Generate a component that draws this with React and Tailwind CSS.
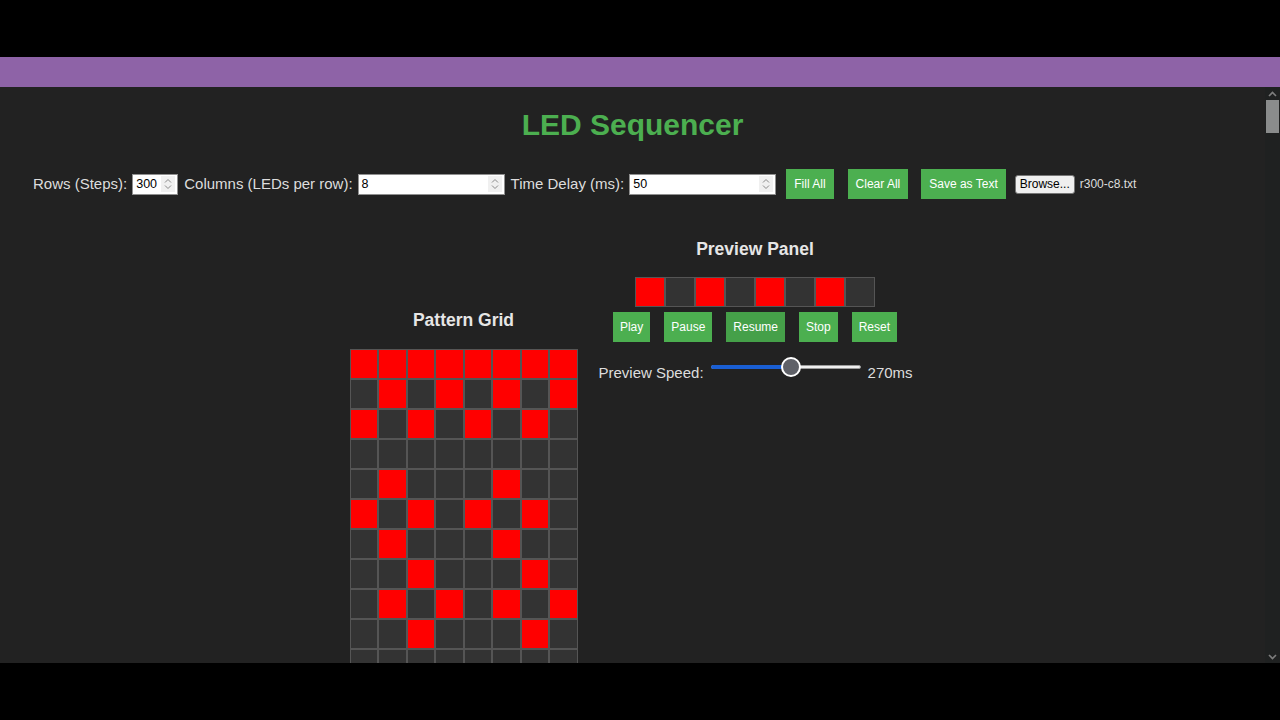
import React from "react";

const GRID = [
  "11111111",
  "01010101",
  "10101010",
  "00000000",
  "01000100",
  "10101010",
  "01000100",
  "00100010",
  "01010101",
  "00100010",
  "00000000",
  "00000000",
];

const PREVIEW = "10101010";

const Spinner = () => (
  <span className="flex h-[16px] w-[14px] flex-col items-center justify-center bg-[#f0f0f0]">
    <svg width="8" height="6" viewBox="0 0 8 6">
      <path d="M1 4.5 L4 1.5 L7 4.5" fill="none" stroke="#8a8a8a" strokeWidth="1" />
    </svg>
    <svg width="8" height="6" viewBox="0 0 8 6">
      <path d="M1 1.5 L4 4.5 L7 1.5" fill="none" stroke="#8a8a8a" strokeWidth="1" />
    </svg>
  </span>
);

const NumberBox = ({ value, width }) => (
  <span
    className={`flex h-[21px] items-center justify-between border border-[#8f8f8f] bg-white pl-[3px] pr-[2px] text-[12.5px] text-black ${width}`}
  >
    <span>{value}</span>
    <Spinner />
  </span>
);

const GreenButton = ({ children, className = "" }) => (
  <button className={`h-[30px] shrink-0 whitespace-nowrap bg-[#4caf50] text-white ${className}`}>
    {children}
  </button>
);

const Cell = ({ on, className = "" }) => (
  <div
    className={`border border-[#555] ${on ? "bg-[#ff0000]" : "bg-[#333333]"} ${className}`}
  />
);

export default function App() {
  return (
    <div
      className="flex h-[720px] w-[1280px] flex-col overflow-hidden bg-black"
      style={{ fontFamily: '"Liberation Sans", Arial, sans-serif' }}
    >
      <div className="h-[57px] shrink-0 bg-black" />
      <div className="h-[30px] shrink-0 bg-[#8e63a7]" />

      <div className="flex h-[576px] shrink-0 overflow-hidden bg-[#222222]">
        {/* page body */}
        <div className="flex-1 overflow-hidden">
          <h1 className="pt-[20px] text-center text-[30px] font-bold leading-[36px] text-[#4caf50]">
            LED Sequencer
          </h1>

          {/* controls */}
          <div className="mt-[26px] flex items-center whitespace-nowrap pl-[33px] text-[15px] text-[#dddddd]">
            <span>Rows (Steps):</span>
            <span className="ml-[5px]">
              <NumberBox value="300" width="w-[46px]" />
            </span>
            <span className="ml-[6px]">Columns (LEDs per row):</span>
            <span className="ml-[5px]">
              <NumberBox value="8" width="w-[147px]" />
            </span>
            <span className="ml-[6px]">Time Delay (ms):</span>
            <span className="ml-[5px]">
              <NumberBox value="50" width="w-[147px]" />
            </span>
            <GreenButton className="ml-[10px] px-[8px] text-[12px]">Fill All</GreenButton>
            <GreenButton className="ml-[14px] px-[8px] text-[12px]">Clear All</GreenButton>
            <GreenButton className="ml-[13px] px-[8px] text-[12px]">Save as Text</GreenButton>
            <button className="ml-[9px] h-[19px] rounded-[3px] border border-[#767676] bg-[#efefef] px-[4px] text-[12px] leading-[17px] text-black">
              Browse...
            </button>
            <span className="ml-[5px] text-[12px]">r300-c8.txt</span>
          </div>

          {/* panels */}
          <div className="mt-[40px] flex items-start justify-center gap-[21px] pr-[4px]">
            <div className="mt-[71px] flex w-[228px] flex-col items-center">
              <h3 className="text-[17.5px] font-bold leading-[20px] text-[#e6e6e6]">
                Pattern Grid
              </h3>
              <div className="mt-[19px] grid w-[228px] grid-cols-8">
                {GRID.flatMap((row, r) =>
                  row
                    .split("")
                    .map((c, i) => (
                      <Cell key={`${r}-${i}`} on={c === "1"} className="h-[30px]" />
                    ))
                )}
              </div>
            </div>

            <div className="flex w-[313px] flex-col items-center">
              <h3 className="text-[17.5px] font-bold leading-[20px] text-[#e6e6e6]">
                Preview Panel
              </h3>
              <div className="mt-[18px] flex">
                {PREVIEW.split("").map((c, i) => (
                  <Cell key={i} on={c === "1"} className="h-[30px] w-[30px]" />
                ))}
              </div>
              <div className="mt-[5px] flex gap-[14px] text-[12px]">
                <GreenButton className="px-[7px]">Play</GreenButton>
                <GreenButton className="px-[7px]">Pause</GreenButton>
                <GreenButton className="bg-[#45a049] px-[7px]">Resume</GreenButton>
                <GreenButton className="px-[7px]">Stop</GreenButton>
                <GreenButton className="px-[7px]">Reset</GreenButton>
              </div>
              <div className="mt-[15px] flex w-[313px] items-center whitespace-nowrap text-[15px] text-[#dddddd]">
                <span className="shrink-0">Preview Speed:</span>
                <div className="relative mb-[12px] ml-[7px] h-[20px] w-[150px] shrink-0">
                  <div className="absolute left-0 right-0 top-[8px] h-[4px] rounded-full border border-[#9a9a9a] bg-[#efefef]" />
                  <div className="absolute left-0 top-[8px] h-[4px] w-[80px] rounded-full bg-[#1a5fd4]" />
                  <div className="absolute left-[70px] top-0 h-[20px] w-[20px] rounded-full border-2 border-white bg-[#5f6168]" />
                </div>
                <span className="ml-[7px] shrink-0">270ms</span>
              </div>
            </div>
          </div>
        </div>

        {/* scrollbar */}
        <div className="flex w-[15px] shrink-0 flex-col items-center bg-[#1f2121]">
          <div className="flex h-[13px] items-center justify-center">
            <svg width="9" height="6" viewBox="0 0 9 6">
              <path d="M1 5 L4.5 1.5 L8 5" fill="none" stroke="#7d7d7d" strokeWidth="1.6" />
            </svg>
          </div>
          <div className="h-[33px] w-[13px] bg-[#8a8c8c]" />
          <div className="flex-1" />
          <div className="flex h-[13px] items-center justify-center">
            <svg width="9" height="6" viewBox="0 0 9 6">
              <path d="M1 1 L4.5 4.5 L8 1" fill="none" stroke="#7d7d7d" strokeWidth="1.6" />
            </svg>
          </div>
        </div>
      </div>

      <div className="flex-1 bg-black" />
    </div>
  );
}
